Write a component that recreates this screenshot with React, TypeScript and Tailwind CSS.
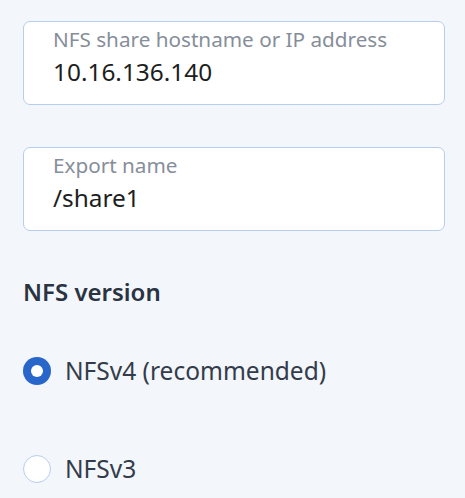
import React, { useState } from 'react';

const font = { fontFamily: '"Noto Sans", "Open Sans", sans-serif' };

interface FieldProps {
  label: string;
  value: string;
}

// Outlined text field with a small label above the value
const Field: React.FC<FieldProps> = ({ label, value }) => (
  <div className="h-[84px] w-[422px] rounded-[7px] border border-[#b7cdee] bg-white pl-[29px] pt-[3px]">
    <div className="text-[20.7px] leading-[28px] text-[#868e99]">{label}</div>
    <div className="mt-[2px] text-[24.4px] leading-[34px] text-[#1c1e21]">{value}</div>
  </div>
);

const Radio: React.FC<{ checked: boolean; label: string; onClick: () => void }> = ({ checked, label, onClick }) => (
  <button type="button" onClick={onClick} className="flex items-center gap-[14px] text-left">
    {checked ? (
      <span className="flex h-[28px] w-[28px] items-center justify-center rounded-full bg-[#2867c9]">
        <span className="h-[12px] w-[12px] rounded-full bg-white" />
      </span>
    ) : (
      <span className="h-[28px] w-[28px] rounded-full border border-[#b7cdee] bg-white" />
    )}
    <span className="text-[24.5px] leading-[32px] text-[#333c4a]">{label}</span>
  </button>
);

export default function App() {
  const [version, setVersion] = useState('v4');

  return (
    <div className="h-[498px] w-[465px] bg-[#f3f6fb] pl-[23px] pt-[21px]" style={font}>
      <Field label="NFS share hostname or IP address" value="10.16.136.140" />
      <div className="mt-[42px]">
        <Field label="Export name" value="/share1" />
      </div>
      <div className="mt-[45px] text-[24px] font-semibold leading-[32px] text-[#2a3341]">NFS version</div>
      <div className="mt-[47px] flex flex-col gap-[66px]">
        <Radio checked={version === 'v4'} label="NFSv4 (recommended)" onClick={() => setVersion('v4')} />
        <Radio checked={version === 'v3'} label="NFSv3" onClick={() => setVersion('v3')} />
      </div>
    </div>
  );
}
